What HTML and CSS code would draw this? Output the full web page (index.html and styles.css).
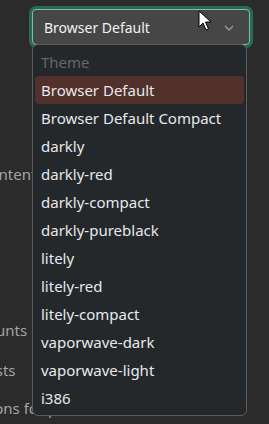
FILE: index.html
```html
<!DOCTYPE html>
<html lang="en">
<head>
  <meta charset="UTF-8" />
  <title>Theme picker</title>
  <link rel="stylesheet" href="styles.css">
</head>
<body>

  <div class="picker">
    <div class="select-box">
      <span class="select-value">Browser Default</span>
      <svg class="chevron" width="10" height="6" viewBox="0 0 10 6">
        <path d="M1 1 L5 5 L9 1" fill="none" stroke="#9a9a9a" stroke-width="1.3" />
      </svg>
    </div>

    <ul class="dropdown-menu">
      <li class="menu-label">Theme</li>
      <li class="menu-item selected">Browser Default</li>
      <li class="menu-item">Browser Default Compact</li>
      <li class="menu-item">darkly</li>
      <li class="menu-item">darkly-red</li>
      <li class="menu-item">darkly-compact</li>
      <li class="menu-item">darkly-pureblack</li>
      <li class="menu-item">litely</li>
      <li class="menu-item">litely-red</li>
      <li class="menu-item">litely-compact</li>
      <li class="menu-item">vaporwave-dark</li>
      <li class="menu-item">vaporwave-light</li>
      <li class="menu-item">i386</li>
    </ul>

    <!-- mouse pointer -->
    <svg class="cursor" width="14" height="22" viewBox="0 0 14 22">
      <path d="M1 1 L1 17 L5 13 L8 20 L10.5 19 L7.5 12 L13 12 Z" fill="#fff" stroke="#000" stroke-width="1" />
    </svg>
  </div>

  <div class="settings">
    <p class="setting-label content-row">Content</p>
    <p class="setting-label accounts-row">Accounts</p>
    <p class="setting-label lists-row">Lists</p>
    <p class="setting-label options-row">Options for posts</p>
  </div>

</body>
</html>
```

FILE: styles.css
```css
body {
  margin: 0;
  background: #2b2b2b;
  font-family: "Noto Sans", "Open Sans", sans-serif;
  height: 424px;
  overflow: hidden;
}

.picker {
  position: relative;
  z-index: 2;
  padding-top: 9px;
  padding-left: 32px;
  height: 36px;
}

.select-box {
  box-sizing: border-box;
  width: 218px;
  height: 36px;
  border: 1px solid #6dc4a7;
  border-radius: 4px;
  box-shadow: 0 0 0 3px #2c6756;
  background: #464646;
  display: flex;
  align-items: center;
  justify-content: space-between;
  padding: 0 15px 0 11px;
  color: #f2f2f2;
  font-size: 14px;
}

.chevron {
  margin-top: 2px;
}

.dropdown-menu {
  position: absolute;
  top: 44px;
  left: 32px;
  width: 215px;
  box-sizing: border-box;
  margin: 0;
  padding: 3px 2px;
  list-style: none;
  background: #25282b;
  border: 1px solid #5a5d60;
  border-radius: 6px;
}

.menu-label,
.menu-item {
  height: 28px;
  line-height: 28px;
  padding-left: 6px;
  font-size: 15px;
  white-space: nowrap;
}

.menu-label {
  color: #63676b;
}

.menu-item {
  color: #e6e8ea;
}

.menu-item.selected {
  background: #52302c;
  border-radius: 4px;
}

.cursor {
  position: absolute;
  top: 10px;
  left: 198px;
}

/* page behind the menu */
.settings {
  position: relative;
  z-index: 1;
}

.setting-label {
  margin: 0;
  height: 20px;
  line-height: 20px;
  font-size: 15px;
  color: #a3a3a3;
  white-space: nowrap;
}

.content-row {
  margin-top: 119px;
  margin-left: -20px;
}

.accounts-row {
  margin-top: 136px;
  margin-left: -37px;
}

.lists-row {
  margin-top: 20px;
  margin-left: -16px;
}

.options-row {
  margin-top: 18px;
  margin-left: -36px;
}
```
